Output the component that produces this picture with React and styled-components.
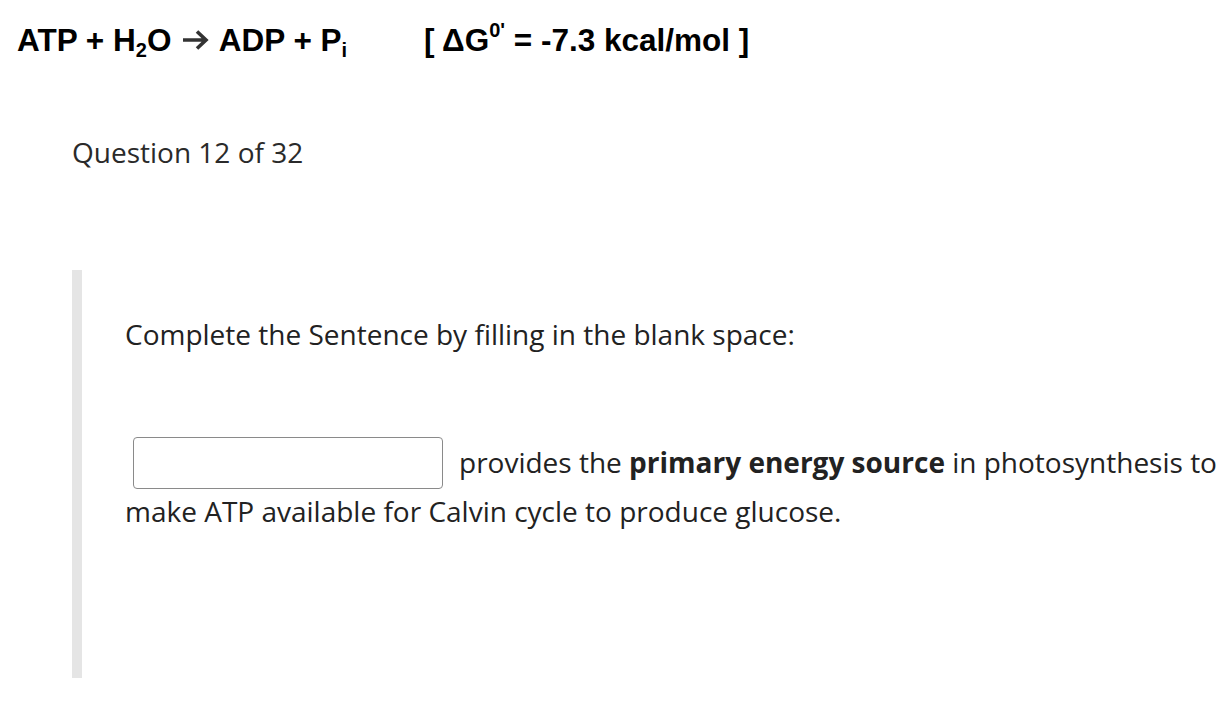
import React from "react";
import styled, { createGlobalStyle } from "styled-components";

const Global = createGlobalStyle`
  html, body { margin: 0; padding: 0; background: #fff; }
  body { font-family: "Open Sans", sans-serif; color: #222; }
`;

const Page = styled.div`
  width: 1232px;
  height: 706px;
  overflow: hidden;
`;

const Equation = styled.div`
  display: flex;
  align-items: baseline;
  padding: 20px 0 0 17px;
  height: 40px;
  font-family: "Liberation Sans", Arial, sans-serif;
  font-weight: 700;
  font-size: 31.5px;
  line-height: 40px;
  color: #000;
  sub, sup { font-size: 20px; line-height: 0; }
  sub { vertical-align: -6px; }
  sup { vertical-align: 14px; }
`;

const Part = styled.span`
  white-space: pre;
  flex: 0 0 ${(p) => (p.$width ? `${p.$width}px` : "auto")};
`;

const ArrowIcon = styled.svg`
  width: 27px;
  height: 22px;
  margin: 0 2px;
  vertical-align: 0px;
`;

const Arrow = () => (
  <ArrowIcon viewBox="0 0 27 22" aria-label="→">
    <path
      d="M1 11 H24 M15 2.5 L24 11 L15 19.5"
      fill="none"
      stroke="#333"
      strokeWidth="3.6"
      strokeLinejoin="miter"
    />
  </ArrowIcon>
);

const Counter = styled.div`
  margin: 73px 0 0 72px;
  font-size: 28px;
  line-height: 38px;
  color: #2a2a2a;
`;

const QuestionBlock = styled.div`
  margin: 99px 0 0 72px;
  height: 408px;
  border-left: 10px solid #e5e5e5;
  padding: 45px 0 0 43px;
  box-sizing: border-box;
`;

const Prompt = styled.p`
  margin: 0;
  font-size: 28px;
  line-height: 38px;
  color: #222;
`;

const Sentence = styled.p`
  margin: 85px 0 0 0;
  font-size: 28px;
  line-height: 49px;
  color: #222;
  b { font-weight: 700; }
`;

const Blank = styled.input`
  width: 310px;
  height: 52px;
  box-sizing: border-box;
  border: 1px solid #8a8a8a;
  border-radius: 4px;
  margin: -13px 16px -8px 8px;
  padding: 0 8px;
  vertical-align: middle;
  font: inherit;
  background: #fff;
`;

export default function App() {
  return (
    <Page>
      <Global />
      <Equation>
        <Part $width={407}>
          ATP + H<sub>2</sub>O <Arrow /> ADP + P<sub>i</sub>
        </Part>
        <Part>
          [ ΔG<sup>0'</sup> = -7.3 kcal/mol ]
        </Part>
      </Equation>
      <Counter>Question 12 of 32</Counter>
      <QuestionBlock>
        <Prompt>Complete the Sentence by filling in the blank space:</Prompt>
        <Sentence>
          <Blank type="text" />
          provides the <b>primary energy source</b> in photosynthesis to make
          ATP available for Calvin cycle to produce glucose.
        </Sentence>
      </QuestionBlock>
    </Page>
  );
}
